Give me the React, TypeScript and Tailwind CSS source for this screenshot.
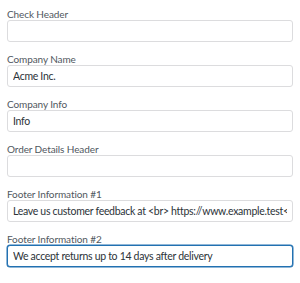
import React from "react";

const fields = [
  { label: "Check Header", value: "" },
  { label: "Company Name", value: "Acme Inc." },
  { label: "Company Info", value: "Info" },
  { label: "Order Details Header", value: "" },
  {
    label: "Footer Information #1",
    value: "Leave us customer feedback at <br> https://www.example.test<br>",
  },
  { label: "Footer Information #2", value: "We accept returns up to 14 days after delivery", focused: true },
];

export default function App() {
  return (
    <div
      className="w-[300px] h-[283px] bg-white pt-[5px] px-[7px]"
      style={{ fontFamily: "'Segoe UI', Lato, sans-serif" }}
    >
      {fields.map((f) => (
        <div key={f.label} className="mb-[8px]">
          <div className="pt-[3px] text-[10px] leading-[12px] tracking-[-0.1px] text-[#50575e]">{f.label}</div>
          <input
            readOnly
            value={f.value}
            className={
              "block w-full h-[22px] rounded-[3px] border bg-white px-[5px] text-[10.5px] tracking-[-0.3px] text-[#2c3338] outline-none " +
              (f.focused ? "border-[#2271b1] shadow-[0_0_0_0.5px_#2271b1]" : "border-[#dcdcde]")
            }
          />
        </div>
      ))}
    </div>
  );
}
